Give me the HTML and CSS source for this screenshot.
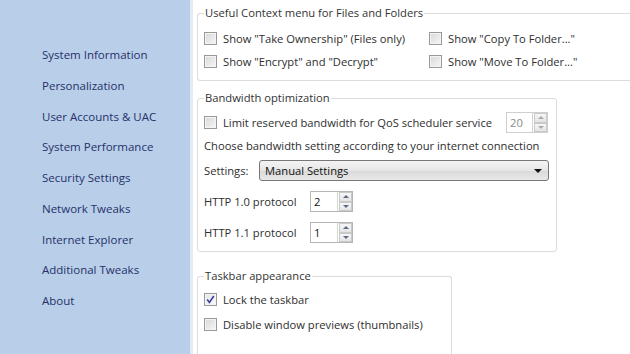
FILE: index.html
```html
<!DOCTYPE html>
<html lang="en">
<head>
    <meta charset="UTF-8">
    <title>Tweaks</title>
    <link rel="stylesheet" href="styles.css">
</head>
<body>

    <div class="sidebar">
        <ul class="nav">
            <li>System Information</li>
            <li>Personalization</li>
            <li>User Accounts &amp; UAC</li>
            <li>System Performance</li>
            <li>Security Settings</li>
            <li>Network Tweaks</li>
            <li>Internet Explorer</li>
            <li>Additional Tweaks</li>
            <li>About</li>
        </ul>
    </div>

    <div class="main">
        <fieldset class="group group-context">
            <legend>Useful Context menu for Files and Folders</legend>
            <div class="grid">
                <label class="check"><span class="box"></span>Show "Take Ownership" (Files only)</label>
                <label class="check"><span class="box"></span>Show "Copy To Folder..."</label>
                <label class="check"><span class="box"></span>Show "Encrypt" and "Decrypt"</label>
                <label class="check"><span class="box"></span>Show "Move To Folder..."</label>
            </div>
        </fieldset>

        <fieldset class="group group-bandwidth">
            <legend>Bandwidth optimization</legend>
            <div class="row">
                <label class="check"><span class="box"></span>Limit reserved bandwidth for QoS scheduler service</label>
                <div class="spin spin-disabled qos">
                    <span class="spin-value">20</span>
                    <span class="spin-buttons"><span class="up"></span><span class="down"></span></span>
                </div>
            </div>
            <div class="row">Choose bandwidth setting according to your internet connection</div>
            <div class="row row-settings">
                <span class="settings-label">Settings:</span>
                <div class="dropdown">
                    <span>Manual Settings</span>
                    <span class="arrow"></span>
                </div>
            </div>
            <div class="row row-spin">
                <span class="spin-label">HTTP 1.0 protocol</span>
                <div class="spin">
                    <span class="spin-value">2</span>
                    <span class="spin-buttons"><span class="up"></span><span class="down"></span></span>
                </div>
            </div>
            <div class="row row-spin">
                <span class="spin-label">HTTP 1.1 protocol</span>
                <div class="spin">
                    <span class="spin-value">1</span>
                    <span class="spin-buttons"><span class="up"></span><span class="down"></span></span>
                </div>
            </div>
        </fieldset>

        <fieldset class="group group-taskbar">
            <legend>Taskbar appearance</legend>
            <label class="check"><span class="box checked">
                <svg width="9" height="9" viewBox="0 0 9 9"><path d="M1.2 4.6 L3.4 7.4 L7.8 1" fill="none" stroke="#3b3f9a" stroke-width="1.6"/></svg>
            </span>Lock the taskbar</label>
            <label class="check"><span class="box"></span>Disable window previews (thumbnails)</label>
        </fieldset>
    </div>

</body>
</html>
```

FILE: styles.css
```css
body, html {
    margin: 0;
    padding: 0;
    width: 100%;
    height: 100%;
    overflow: hidden;
    background: #fff;
}
body {
    display: flex;
    font-family: 'Open Sans', sans-serif;
    font-size: 11.2px;
    color: #2e2e2e;
}
.sidebar {
    width: 190px;
    flex-shrink: 0;
    background-color: #b9cee8;
    border-right: 3px solid #e3ecf6;
}
.nav {
    list-style: none;
    margin: 0;
    padding: 40px 0 0 42px;
}
.nav li {
    height: 30.75px;
    line-height: 30.75px;
    font-size: 11.5px;
    color: #25316a;
    white-space: nowrap;
}
.main {
    padding: 5px 0 0 4px;
    flex: 1;
    min-width: 0;
    overflow: hidden;
}
.group {
    margin: 0;
    padding: 0 6px;
    min-width: 0;
    border: 1px solid #dcdcdc;
    border-radius: 3px;
    box-sizing: border-box;
}
.group legend {
    padding: 0 1px;
    line-height: 16px;
    color: #333;
    white-space: nowrap;
}
.group-context {
    width: 433px;
    border-right: none;
    border-radius: 3px 0 0 3px;
    padding-top: 6px;
    padding-bottom: 7px;
}
.group-bandwidth {
    width: 360px;
    margin-top: 9px;
    padding-top: 5px;
    padding-bottom: 7px;
}
.group-taskbar {
    width: 255px;
    height: 86px;
    margin-top: 16px;
    padding-top: 4px;
    border-bottom: none;
    border-radius: 3px 3px 0 0;
}
.grid {
    display: grid;
    grid-template-columns: 225px auto;
}
.check {
    display: flex;
    align-items: center;
    height: 23px;
    white-space: nowrap;
}
.group-taskbar .check + .check {
    margin-top: 2px;
}
.box {
    width: 11px;
    height: 11px;
    border: 1px solid #999;
    background: linear-gradient(135deg, #d8d8d8, #f6f6f6);
    box-shadow: inset 0 0 0 1px #f4f4f4;
    margin-right: 6px;
    display: flex;
    align-items: center;
    justify-content: center;
    flex-shrink: 0;
}
.box.checked {
    background: linear-gradient(135deg, #e4e4ee, #fafafa);
}
.row {
    display: flex;
    align-items: center;
    height: 23px;
    white-space: nowrap;
}
.row-settings {
    margin-top: 2px;
}
.row-spin {
    margin-top: 8px;
}
.settings-label {
    width: 55px;
}
.dropdown {
    width: 290px;
    height: 21px;
    box-sizing: border-box;
    border: 1px solid #777;
    border-radius: 3px;
    background: linear-gradient(#f4f4f4, #e6e6e6 50%, #d9d9d9 51%, #e8e8e8);
    display: flex;
    align-items: center;
    justify-content: space-between;
    padding: 0 6px 0 5px;
    color: #111;
}
.arrow {
    width: 0;
    height: 0;
    border-left: 4px solid transparent;
    border-right: 4px solid transparent;
    border-top: 4px solid #111;
}
.spin-label {
    width: 106px;
}
.spin {
    width: 43px;
    height: 21px;
    box-sizing: border-box;
    border: 1px solid #b5b5b5;
    background: #fff;
    display: flex;
    color: #111;
}
.spin-value {
    flex: 1;
    padding-left: 3px;
    line-height: 19px;
}
.spin-buttons {
    width: 14px;
    display: flex;
    flex-direction: column;
    border-left: 1px solid #d4d4d4;
}
.spin-buttons span {
    flex: 1;
    background: linear-gradient(#f7f7f7, #e4e4e4);
    border: 1px solid #c9c9c9;
    margin: 0 0 0 1px;
    display: flex;
    align-items: center;
    justify-content: center;
}
.spin-buttons .up::after {
    content: '';
    border-left: 3px solid transparent;
    border-right: 3px solid transparent;
    border-bottom: 3px solid #5a6a8a;
}
.spin-buttons .down::after {
    content: '';
    border-left: 3px solid transparent;
    border-right: 3px solid transparent;
    border-top: 3px solid #5a6a8a;
}
.qos {
    margin-left: 14px;
    width: 42px;
}
.spin-disabled {
    border-color: #cfcfcf;
    color: #8a8a8a;
}
.spin-disabled .spin-buttons .up::after {
    border-bottom-color: #aaa;
}
.spin-disabled .spin-buttons .down::after {
    border-top-color: #aaa;
}
```
